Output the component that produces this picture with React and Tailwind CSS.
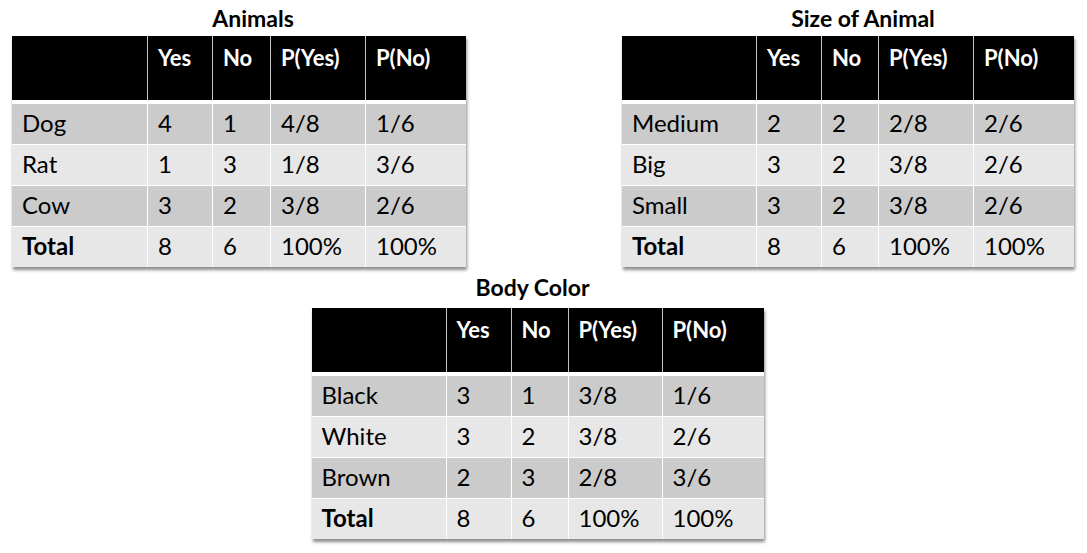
import React from "react";

const tables = [
  {
    title: "Animals",
    titleCls: "h-[36px] pl-[28px]",
    widths: [135, 64, 57, 94, 100],
    rows: [
      ["Dog", "4", "1", "4/8", "1/6"],
      ["Rat", "1", "3", "1/8", "3/6"],
      ["Cow", "3", "2", "3/8", "2/6"],
    ],
  },
  {
    title: "Size of Animal",
    titleCls: "h-[36px] pl-[30px]",
    widths: [134, 64, 56, 94, 100],
    rows: [
      ["Medium", "2", "2", "2/8", "2/6"],
      ["Big", "3", "2", "3/8", "2/6"],
      ["Small", "3", "2", "3/8", "2/6"],
    ],
  },
  {
    title: "Body Color",
    titleCls: "h-[41px] pr-[10px]",
    widths: [134, 64, 56, 93, 101],
    rows: [
      ["Black", "3", "1", "3/8", "1/6"],
      ["White", "3", "2", "3/8", "2/6"],
      ["Brown", "2", "3", "2/8", "3/6"],
    ],
  },
];

const head = ["", "Yes", "No", "P(Yes)", "P(No)"];
const total = ["Total", "8", "6", "100%", "100%"];

function DataTable({ t }) {
  return (
    <div className="flex flex-col">
      {/* titulo */}
      <div className={`${t.titleCls} flex items-center justify-center font-bold text-[23px] text-black`}>
        {t.title}
      </div>
      <div className="flex flex-col bg-white shadow-[1px_3px_3px_rgba(0,0,0,0.45)]">
        <div className="flex gap-px bg-[#c4c4c4] h-[64px]">
          {head.map((h, i) => (
            <div
              key={i}
              style={{ width: t.widths[i] }}
              className="bg-black text-white font-bold text-[22px] pl-[10px] pt-[7px] leading-[30px]"
            >
              {h}
            </div>
          ))}
        </div>
        <div className="h-[4px]" />
        <div className="flex flex-col gap-px">
          {[...t.rows, total].map((r, ri) => (
            <div key={ri} className="flex gap-px h-[40px]">
              {r.map((c, ci) => (
                <div
                  key={ci}
                  style={{ width: t.widths[ci] }}
                  className={`${ri % 2 === 0 ? "bg-[#cbcbcb]" : "bg-[#e7e7e7]"} ${ri === 3 && ci === 0 ? "font-bold" : ""} flex items-center pl-[10px] pb-[3px] text-[24px] text-black`}
                >
                  {c}
                </div>
              ))}
            </div>
          ))}
        </div>
      </div>
    </div>
  );
}

export default function App() {
  return (
    <div className="w-[1087px] h-[553px] bg-white font-['Lato',sans-serif] flex flex-col">
      <div className="flex justify-between pl-[12px] pr-[13px]">
        <DataTable t={tables[0]} />
        <DataTable t={tables[1]} />
      </div>
      <div className="flex justify-center pr-[12px]">
        <DataTable t={tables[2]} />
      </div>
    </div>
  );
}
